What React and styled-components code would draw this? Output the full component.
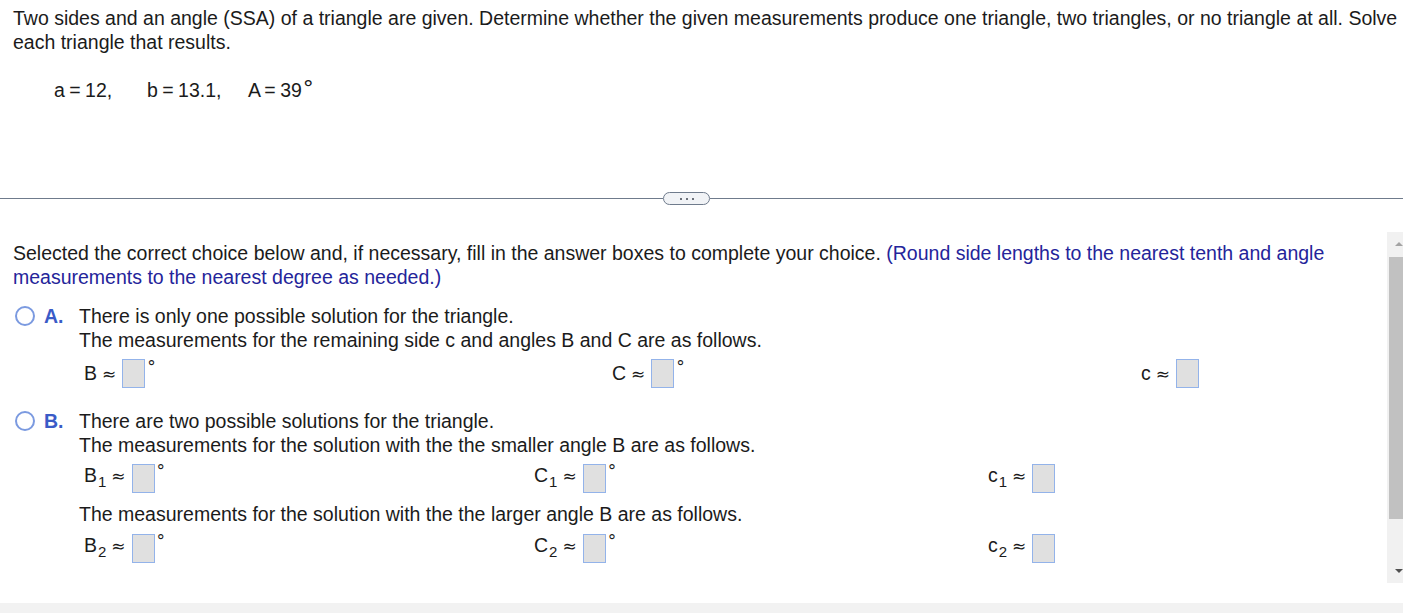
import React from "react";
import styled, { createGlobalStyle } from "styled-components";

const Global = createGlobalStyle`
  html, body { margin: 0; padding: 0; background: #fff; }
  body { font-family: "Liberation Sans", Arial, sans-serif; color: #1b1b1b; }
`;

const Page = styled.div`
  width: 1403px;
  height: 613px;
  display: flex;
  flex-direction: column;
  overflow: hidden;
  background: #fff;
  font-size: 19.5px;
  line-height: 24px;
`;

const Question = styled.div`
  padding: 6px 0 0 13px;
`;

const Givens = styled.div`
  display: flex;
  height: 24px;
  margin-top: 24px;
  padding-left: 41px;
`;

const Given = styled.span`
  flex: 0 0 ${(p) => p.$w || "auto"};
  white-space: nowrap;
  word-spacing: -1px;
`;

const Deg = styled.span`
  font-family: "DejaVu Sans", sans-serif;
  font-size: 22px;
  line-height: 0;
  vertical-align: 1px;
  margin-left: 1px;
`;

const Divider = styled.div`
  display: flex;
  align-items: center;
  height: 13px;
  margin-top: 90px;
`;

const Line = styled.div`
  height: 1px;
  background: #6f7b8c;
  flex: ${(p) => p.$flex};
`;

const Pill = styled.div`
  flex: 0 0 47px;
  height: 13px;
  box-sizing: border-box;
  border: 1px solid #6f7b8c;
  border-radius: 7px;
  background: #f1f3f6;
  display: flex;
  align-items: center;
  justify-content: center;
  gap: 4px;
`;

const Dot = styled.span`
  width: 2px;
  height: 2px;
  border-radius: 50%;
  background: #3f4650;
`;

const Panel = styled.div`
  display: flex;
  height: 351px;
  margin-top: 27px;
`;

const Content = styled.div`
  flex: 1;
  padding: 9px 0 0 13px;
  overflow: hidden;
`;

const Instructions = styled.div``;

const Blue = styled.span`
  color: #24249a;
`;

const Option = styled.div`
  display: flex;
  align-items: flex-start;
  margin-top: ${(p) => p.$mt}px;
`;

const Radio = styled.span`
  flex: none;
  width: 20px;
  height: 20px;
  box-sizing: border-box;
  border: 2px solid #7b9ae0;
  border-radius: 50%;
  margin: 2px 0 0 2px;
`;

const Letter = styled.span`
  flex: 0 0 35px;
  margin-left: 9px;
  font-weight: bold;
  color: #3a5bc7;
`;

const Body = styled.div`
  flex: 1;
`;

const TextLine = styled.div`
  margin-top: ${(p) => p.$mt || 0}px;
`;

const AnswerRow = styled.div`
  display: grid;
  grid-template-columns: ${(p) => p.$cols};
  height: 30px;
  align-items: center;
  padding-left: 5px;
  margin-top: ${(p) => p.$mt}px;
`;

const Cell = styled.div`
  display: flex;
  align-items: center;
  white-space: nowrap;
`;

const Sub = styled.span`
  font-size: 15px;
  vertical-align: -5px;
  margin-left: 1px;
`;

const Approx = styled.span`
  font-family: "DejaVu Sans", sans-serif;
  font-size: 17px;
  margin-left: 5px;
`;

const Box = styled.span`
  width: 23px;
  height: 29px;
  box-sizing: border-box;
  background: #e0e0e0;
  border: 1px solid #93b3ea;
  margin-left: 6px;
`;

const BoxDeg = styled.span`
  align-self: flex-start;
  font-family: "DejaVu Sans", sans-serif;
  font-size: 17px;
  line-height: 17px;
  margin-left: 2px;
`;

const Scrollbar = styled.div`
  flex: 0 0 15px;
  background: #f1f1f1;
  display: flex;
  flex-direction: column;
`;

const ArrowBox = styled.div`
  height: 24px;
  display: flex;
  align-items: center;
  padding-left: 8px;
`;

const Arrow = styled.span`
  width: 0;
  height: 0;
  border-left: 4px solid transparent;
  border-right: 4px solid transparent;
  ${(p) =>
    p.$down
      ? "border-top: 4px solid #505050;"
      : "border-bottom: 4px solid #a3a3a3;"}
`;

const Thumb = styled.div`
  height: 262px;
  margin: 1px 0 0 2px;
  background: #c1c1c1;
`;

const Spacer = styled.div`
  flex: 1;
`;

const Footer = styled.div`
  margin-top: 20px;
  height: 10px;
  background: #f2f2f2;
`;

function Answer({ label, sub, deg }) {
  return (
    <Cell>
      <span>
        {label}
        {sub && <Sub>{sub}</Sub>}
        <Approx>≈</Approx>
      </span>
      <Box />
      {deg && <BoxDeg>°</BoxDeg>}
    </Cell>
  );
}

export default function App() {
  return (
    <Page>
      <Global />
      <Question>
        Two sides and an angle (SSA) of a triangle are given. Determine whether
        the given measurements produce one triangle, two triangles, or no
        triangle at all. Solve each triangle that results.
        <Givens>
          <Given $w="93px">a = 12,</Given>
          <Given $w="101px">b = 13.1,</Given>
          <Given>
            A = 39<Deg>°</Deg>
          </Given>
        </Givens>
      </Question>
      <Divider>
        <Line $flex="0 0 663px" />
        <Pill>
          <Dot />
          <Dot />
          <Dot />
        </Pill>
        <Line $flex="1" />
      </Divider>
      <Panel>
        <Content>
          <Instructions>
            Selected the correct choice below and, if necessary, fill in the
            answer boxes to complete your choice.{" "}
            <Blue>
              (Round side lengths to the nearest tenth and angle measurements
              to the nearest degree as needed.)
            </Blue>
          </Instructions>
          <Option $mt={15}>
            <Radio />
            <Letter>A.</Letter>
            <Body>
              <TextLine>There is only one possible solution for the triangle.</TextLine>
              <TextLine>
                The measurements for the remaining side c and angles B and C
                are as follows.
              </TextLine>
              <AnswerRow $cols="528px 529px auto" $mt={6}>
                <Answer label="B" deg />
                <Answer label="C" deg />
                <Answer label="c" />
              </AnswerRow>
            </Body>
          </Option>
          <Option $mt={21}>
            <Radio />
            <Letter>B.</Letter>
            <Body>
              <TextLine>There are two possible solutions for the triangle.</TextLine>
              <TextLine>
                The measurements for the solution with the the smaller angle B
                are as follows.
              </TextLine>
              <AnswerRow $cols="450px 454px auto" $mt={6}>
                <Answer label="B" sub="1" deg />
                <Answer label="C" sub="1" deg />
                <Answer label="c" sub="1" />
              </AnswerRow>
              <TextLine $mt={9}>
                The measurements for the solution with the the larger angle B
                are as follows.
              </TextLine>
              <AnswerRow $cols="450px 454px auto" $mt={7}>
                <Answer label="B" sub="2" deg />
                <Answer label="C" sub="2" deg />
                <Answer label="c" sub="2" />
              </AnswerRow>
            </Body>
          </Option>
        </Content>
        <Scrollbar>
          <ArrowBox>
            <Arrow />
          </ArrowBox>
          <Thumb />
          <Spacer />
          <ArrowBox>
            <Arrow $down />
          </ArrowBox>
        </Scrollbar>
      </Panel>
      <Footer />
    </Page>
  );
}
